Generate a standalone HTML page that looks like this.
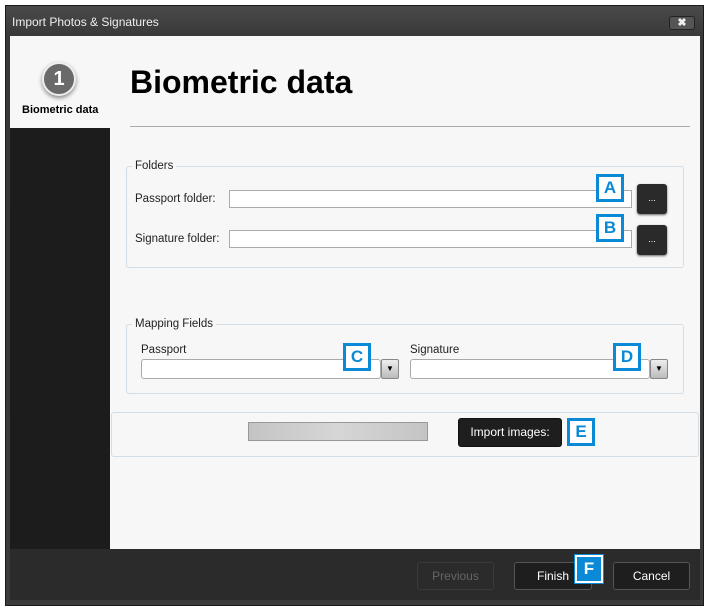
<!DOCTYPE html>
<html><head><style>
*{box-sizing:border-box;margin:0;padding:0}
body{width:710px;height:610px;background:#fff;font-family:"Liberation Sans",sans-serif;position:relative;overflow:hidden}
.win{position:absolute;left:5px;top:5px;width:699px;height:601px;background:linear-gradient(#4a4a4a,#383838 31px,#3a3a3a);border:1px solid #1a1a1a}
.title{position:absolute;left:12px;top:15px;color:#eee;font-size:12px}
.close{position:absolute;left:669px;top:16px;width:26px;height:14px;border:1px solid #222;border-radius:3px;background:#555;color:#eee;font-size:11px;text-align:center;line-height:12px;font-weight:bold}
.content{position:absolute;left:10px;top:36px;width:690px;height:513px;background:#f7f7f7}
.side{position:absolute;left:10px;top:128px;width:100px;height:421px;background:#1c1c1c}
.circ{position:absolute;left:42px;top:62px;width:34px;height:34px;border-radius:50%;background:#6a6a6a;border:2px solid #eee;box-shadow:0 2px 4px #888;color:#fff;font-weight:bold;font-size:20px;text-align:center;line-height:30px}
.abs{position:absolute}
.lab{font-size:11.5px;color:#222}
.inp{position:absolute;background:#fff;border:1px solid #aaa;height:18px}
.dots{position:absolute;width:30px;height:30px;background:#2a2a2a;border-radius:3px;color:#fff;font-size:9px;text-align:center;line-height:28px;box-shadow:0 1px 2px #666}
.tag{position:absolute;width:28px;height:28px;border:3px solid #0a8ad6;background:#fff;color:#0a8ad6;font-weight:bold;font-size:17px;text-align:center;line-height:22px}
.grp{position:absolute;border:1px solid #d4dde3;border-radius:3px}
.dd{position:absolute;width:18px;height:20px;background:linear-gradient(#eee,#bbb);border:1px solid #888;border-radius:2px;font-size:8px;text-align:center;line-height:18px}
.footer{position:absolute;left:10px;top:549px;width:690px;height:51px;background:#2b2b2b}
.btn{position:absolute;height:28px;border:1px solid #555;border-radius:3px;background:#1e1e1e;color:#fff;font-size:12px;text-align:center;line-height:26px}
</style></head><body>
<div class="win"></div>
<div class="title">Import Photos &amp; Signatures</div>
<div class="close">✖</div>
<div class="content"></div>
<div class="side"></div>
<div class="circ">1</div>
<div class="abs" style="left:22px;top:104px;font-size:11px;font-weight:bold">Biometric data</div>
<div class="abs" style="left:130px;top:64px;font-size:32px;font-weight:bold">Biometric data</div>
<div class="abs" style="left:130px;top:126px;width:560px;height:1px;background:#aaa"></div>

<div class="grp" style="left:126px;top:166px;width:558px;height:102px"></div>
<div class="abs lab" style="left:132px;top:160px;background:#f7f7f7;padding:0 3px">Folders</div>
<div class="abs lab" style="left:135px;top:193px">Passport folder:</div>
<div class="inp" style="left:229px;top:190px;width:403px"></div>
<div class="dots" style="left:637px;top:184px">...</div>
<div class="abs lab" style="left:135px;top:233px">Signature folder:</div>
<div class="inp" style="left:229px;top:230px;width:403px"></div>
<div class="dots" style="left:637px;top:225px">...</div>
<div class="tag" style="left:596px;top:174px">A</div>
<div class="tag" style="left:596px;top:214px">B</div>

<div class="grp" style="left:126px;top:324px;width:558px;height:70px"></div>
<div class="abs lab" style="left:132px;top:318px;background:#f7f7f7;padding:0 3px">Mapping Fields</div>
<div class="abs lab" style="left:141px;top:344px">Passport</div>
<div class="inp" style="left:141px;top:359px;width:240px;height:20px;border-radius:3px"></div>
<div class="dd" style="left:381px;top:359px">▼</div>
<div class="abs lab" style="left:410px;top:344px">Signature</div>
<div class="inp" style="left:410px;top:359px;width:240px;height:20px;border-radius:3px"></div>
<div class="dd" style="left:650px;top:359px">▼</div>
<div class="tag" style="left:343px;top:343px">C</div>
<div class="tag" style="left:613px;top:343px">D</div>

<div class="grp" style="left:111px;top:412px;width:588px;height:45px;background:#f7f7f7"></div>
<div class="abs" style="left:248px;top:422px;width:180px;height:19px;background:linear-gradient(90deg,#c4c4c4,#d6d6d6 50%,#c4c4c4);border:1px solid #999"></div>
<div class="btn" style="left:458px;top:418px;width:104px;height:29px;line-height:27px;border-color:#111">Import images:</div>
<div class="tag" style="left:567px;top:418px">E</div>

<div class="footer"></div>
<div class="btn" style="left:417px;top:562px;width:77px;color:#666;background:#2b2b2b;border-color:#3a3a3a">Previous</div>
<div class="btn" style="left:514px;top:562px;width:78px">Finish</div>
<div class="btn" style="left:613px;top:562px;width:77px">Cancel</div>
<div class="tag" style="left:575px;top:555px;background:#0a8ad6;color:#fff;border:2px solid #fff;outline:1px solid #0a8ad6;line-height:24px">F</div>
</body></html>
